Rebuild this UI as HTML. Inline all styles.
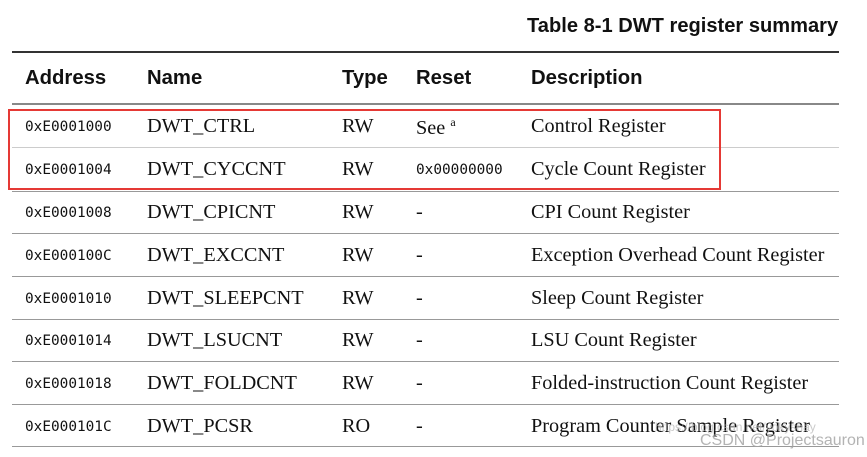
<!DOCTYPE html>
<html><head><meta charset="utf-8"><style>
body{margin:0;width:867px;height:457px;background:#fff;position:relative;overflow:hidden;color:#111}
.t{position:absolute;white-space:nowrap}
.h{font:bold 20.3px "Liberation Sans",sans-serif}
.s{font:20.3px "Liberation Serif",serif}
.m{font:14.4px "DejaVu Sans Mono",monospace}
.l{position:absolute;left:12px;width:827px;height:1px;background:#999}
</style></head><body>
<div class="t h" style="left:527px;top:15px;font-size:20.1px">Table 8-1 DWT register summary</div>
<div class="l" style="top:51px;height:2px;background:#333"></div>
<div class="t h" style="left:25px;top:67px">Address</div>
<div class="t h" style="left:147px;top:67px">Name</div>
<div class="t h" style="left:342px;top:67px">Type</div>
<div class="t h" style="left:416px;top:67px">Reset</div>
<div class="t h" style="left:531px;top:67px">Description</div>
<div class="l" style="top:103px;height:2px;background:#888"></div>

<div class="l" style="top:147px;background:#ccc"></div>
<div class="l" style="top:191px"></div>
<div class="l" style="top:233px"></div>
<div class="l" style="top:276px"></div>
<div class="l" style="top:319px"></div>
<div class="l" style="top:361px"></div>
<div class="l" style="top:404px"></div>
<div class="l" style="top:446px"></div>

<div style="position:absolute;left:8px;top:109px;width:709px;height:77px;border:2px solid #e53935"></div>

<div class="t m" style="left:25px;top:119px">0xE0001000</div>
<div class="t s" style="left:147px;top:115px">DWT_CTRL</div>
<div class="t s" style="left:342px;top:115px">RW</div>
<div class="t s" style="left:416px;top:115px">See <sup style="font-size:12px">a</sup></div>
<div class="t s" style="left:531px;top:115px">Control Register</div>

<div class="t m" style="left:25px;top:162px">0xE0001004</div>
<div class="t s" style="left:147px;top:158px">DWT_CYCCNT</div>
<div class="t s" style="left:342px;top:158px">RW</div>
<div class="t m" style="left:416px;top:162px">0x00000000</div>
<div class="t s" style="left:531px;top:158px">Cycle Count Register</div>

<div class="t m" style="left:25px;top:205px">0xE0001008</div>
<div class="t s" style="left:147px;top:201px">DWT_CPICNT</div>
<div class="t s" style="left:342px;top:201px">RW</div>
<div class="t s" style="left:416px;top:201px">-</div>
<div class="t s" style="left:531px;top:201px">CPI Count Register</div>

<div class="t m" style="left:25px;top:248px">0xE000100C</div>
<div class="t s" style="left:147px;top:244px">DWT_EXCCNT</div>
<div class="t s" style="left:342px;top:244px">RW</div>
<div class="t s" style="left:416px;top:244px">-</div>
<div class="t s" style="left:531px;top:244px">Exception Overhead Count Register</div>

<div class="t m" style="left:25px;top:291px">0xE0001010</div>
<div class="t s" style="left:147px;top:287px">DWT_SLEEPCNT</div>
<div class="t s" style="left:342px;top:287px">RW</div>
<div class="t s" style="left:416px;top:287px">-</div>
<div class="t s" style="left:531px;top:287px">Sleep Count Register</div>

<div class="t m" style="left:25px;top:333px">0xE0001014</div>
<div class="t s" style="left:147px;top:329px">DWT_LSUCNT</div>
<div class="t s" style="left:342px;top:329px">RW</div>
<div class="t s" style="left:416px;top:329px">-</div>
<div class="t s" style="left:531px;top:329px">LSU Count Register</div>

<div class="t m" style="left:25px;top:376px">0xE0001018</div>
<div class="t s" style="left:147px;top:372px">DWT_FOLDCNT</div>
<div class="t s" style="left:342px;top:372px">RW</div>
<div class="t s" style="left:416px;top:372px">-</div>
<div class="t s" style="left:531px;top:372px">Folded-instruction Count Register</div>

<div class="t m" style="left:25px;top:419px">0xE000101C</div>
<div class="t s" style="left:147px;top:415px">DWT_PCSR</div>
<div class="t s" style="left:342px;top:415px">RO</div>
<div class="t s" style="left:416px;top:415px">-</div>
<div class="t s" style="left:531px;top:415px">Program Counter Sample Register</div>
<div class="t" style="left:655px;top:420px;font:12px 'Liberation Sans',sans-serif;color:rgba(180,180,180,0.7)">https://blog.csdn.net/yokyshay</div>
<div class="t" style="left:700px;top:432px;font:16px 'Liberation Sans',sans-serif;color:rgba(160,160,160,0.8)">CSDN @Projectsauron</div>
</body></html>
